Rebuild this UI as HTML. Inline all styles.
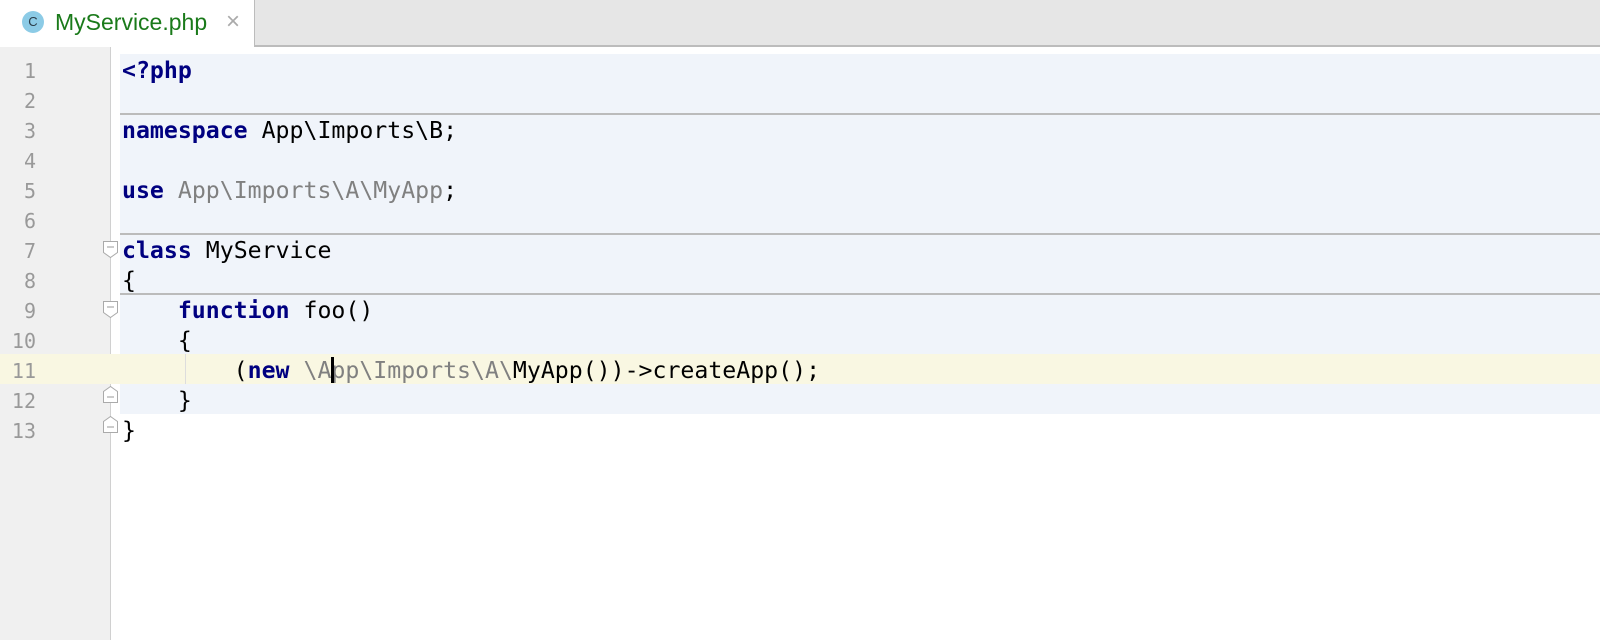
<!DOCTYPE html>
<html><head><style>
body{margin:0;width:1600px;height:640px;overflow:hidden;background:#fff;position:relative;font-family:"Liberation Sans",sans-serif}
.tabbar{position:absolute;left:0;top:0;width:1600px;height:45px;background:#e6e6e6;border-bottom:2px solid #bcbcbc}
.tab{position:absolute;left:0;top:0;width:254px;height:47px;background:#fff;border-right:1px solid #bcbcbc}
.ic{position:absolute;left:22px;top:11px;width:22px;height:22px;border-radius:50%;background:#8ccbe6;color:#2a3b47;font-size:13px;text-align:center;line-height:22px}
.tt{position:absolute;left:55px;top:9px;font-size:23px;color:#1a7a1a}
.x{position:absolute;left:226px;top:8px;font-size:24px;color:#aaa}
.gut{position:absolute;left:0;top:47px;width:110px;height:593px;background:#f0f0f0;border-right:1px solid #d0d0d0}
.blue{position:absolute;left:120px;top:54px;width:1480px;height:360px;background:#f0f4fa}
.sep{position:absolute;left:120px;width:1480px;height:2px;background:#bbb}
.yl{position:absolute;left:0;top:354px;width:1600px;height:30px;background:#f9f7e2}
.ln{position:absolute;left:0;width:36px;text-align:right;font-family:"DejaVu Sans Mono",monospace;font-size:20px;color:#999;line-height:30px}
.code{position:absolute;left:122px;top:56px;font-family:"DejaVu Sans Mono",monospace;font-size:23.2px;line-height:30px;white-space:pre;color:#000}
.k{color:#000080;font-weight:bold}.g{color:#808080}
.caret{position:absolute;left:331px;top:357px;width:3px;height:26px;background:#000}
.guide{position:absolute;left:185px;top:354px;width:1px;height:30px;background:#ddd}
.fold{position:absolute;left:103px;width:15px;height:17px}
</style></head><body>
<div class="tabbar"></div>
<div class="tab"><div class="ic">C</div><div class="tt">MyService.php</div><div class="x">×</div></div>
<div class="gut"></div>
<div class="blue"></div>
<div class="yl"></div>
<div class="sep" style="top:113px"></div>
<div class="sep" style="top:233px"></div>
<div class="sep" style="top:293px"></div>
<div class="guide"></div>
<div class="ln" style="top:56px">1</div><div class="ln" style="top:86px">2</div><div class="ln" style="top:116px">3</div><div class="ln" style="top:146px">4</div><div class="ln" style="top:176px">5</div><div class="ln" style="top:206px">6</div><div class="ln" style="top:236px">7</div><div class="ln" style="top:266px">8</div><div class="ln" style="top:296px">9</div><div class="ln" style="top:326px">10</div><div class="ln" style="top:356px">11</div><div class="ln" style="top:386px">12</div><div class="ln" style="top:416px">13</div>
<svg class="fold" style="top:241px" viewBox="0 0 15 17"><path d="M.5 .5h14v11l-7 5-7-5z" fill="#fff" stroke="#aaa"/><path d="M4 6h7" stroke="#999"/></svg>
<svg class="fold" style="top:301px" viewBox="0 0 15 17"><path d="M.5 .5h14v11l-7 5-7-5z" fill="#fff" stroke="#aaa"/><path d="M4 6h7" stroke="#999"/></svg>
<svg class="fold" style="top:386px" viewBox="0 0 15 17"><path d="M.5 16.5h14v-11l-7-5-7 5z" fill="#fff" stroke="#aaa"/><path d="M4 11h7" stroke="#999"/></svg>
<svg class="fold" style="top:416px" viewBox="0 0 15 17"><path d="M.5 16.5h14v-11l-7-5-7 5z" fill="#fff" stroke="#aaa"/><path d="M4 11h7" stroke="#999"/></svg>
<div class="code"><span class="k">&lt;?php</span>

<span class="k">namespace</span> App\Imports\B;

<span class="k">use</span> <span class="g">App\Imports\A\MyApp</span>;

<span class="k">class</span> MyService
{
    <span class="k">function</span> foo()
    {
        (<span class="k">new</span> <span class="g">\App\Imports\A\</span>MyApp())-&gt;createApp();
    }
}</div>
<div class="caret"></div>
</body></html>
